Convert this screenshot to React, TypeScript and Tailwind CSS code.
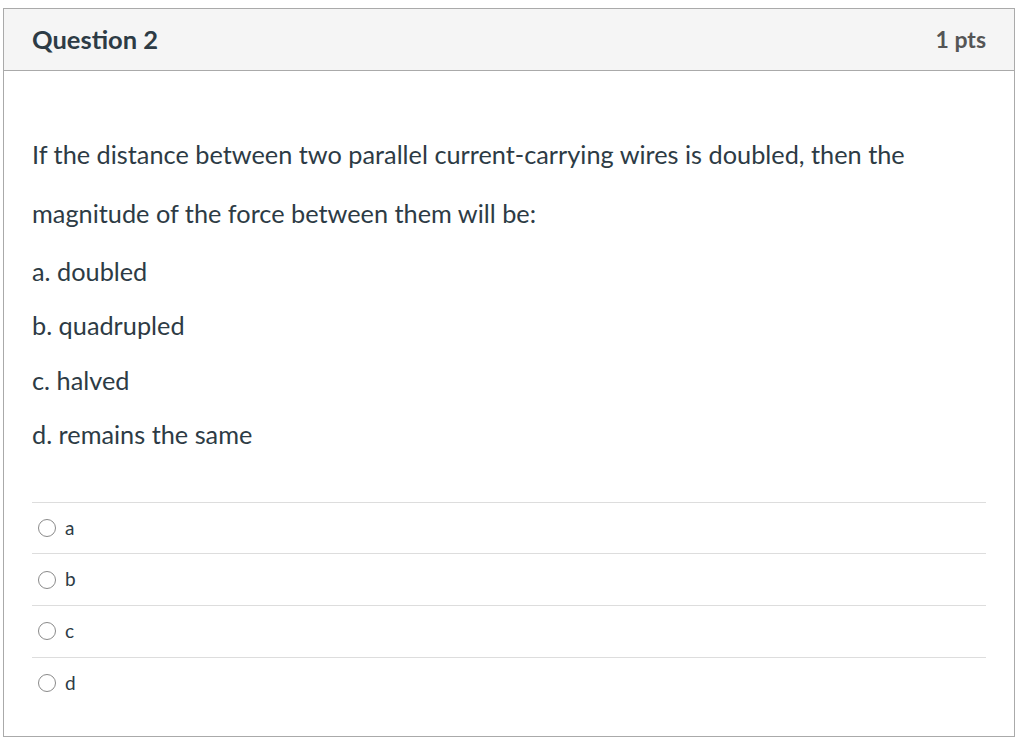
import React from "react";

const options = ["a", "b", "c", "d"];

export default function App() {
  return (
    <div className="min-h-[740px] bg-white pl-[3px] pt-[8px]" style={{ fontFamily: "Lato, 'Noto Sans', sans-serif" }}>
      <div className="w-[1012px] h-[729px] border border-[#aaaaaa] flex flex-col text-[#2d3b45]">
        <div className="h-[62px] bg-[#f5f5f5] border-b border-[#aaaaaa] flex items-center justify-between px-7">
          <span className="text-[25.5px] font-bold">Question 2</span>
          <span className="text-[23px] font-bold text-[#555555]">1 pts</span>
        </div>
        <div className="px-7 pt-[54px] flex flex-col">
          <p className="text-[25.3px] leading-[59px]">
            If the distance between two parallel current-carrying wires is doubled, then the magnitude of the force between them will be:
          </p>
          <div className="flex flex-col mt-[1px]">
            <p className="text-[25.3px] leading-[54.4px]">a. doubled</p>
            <p className="text-[25.3px] leading-[54.4px]">b. quadrupled</p>
            <p className="text-[25.3px] leading-[54.4px]">c. halved</p>
            <p className="text-[25.3px] leading-[54.4px]">d. remains the same</p>
          </div>
          <div className="mt-[40px] flex flex-col">
            {options.map((o) => (
              <div key={o} className="h-[51.7px] border-t border-[#dddddd] flex items-center gap-[9px] pl-[6px]">
                <span className="w-[18px] h-[18px] rounded-full border-[1.5px] border-[#8a8a8a] bg-white" />
                <span className="text-[19px]">{o}</span>
              </div>
            ))}
          </div>
        </div>
      </div>
    </div>
  );
}
